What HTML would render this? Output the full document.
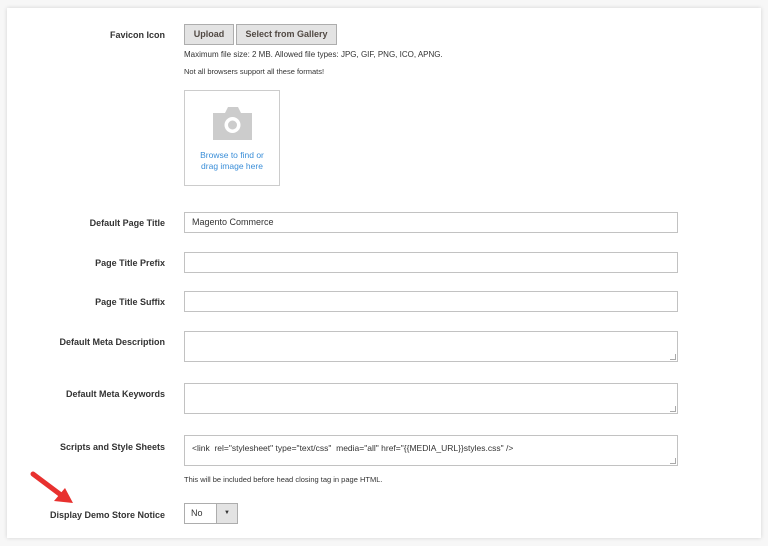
<!DOCTYPE html>
<html><head><style>
body{margin:0;width:768px;height:546px;background:#f7f7f7;font-family:"Liberation Sans",sans-serif;position:relative;overflow:hidden}
.card{position:absolute;left:7px;top:8px;width:754px;height:530px;background:#fff;box-shadow:0 0 4px rgba(0,0,0,.15)}
.a{position:absolute}
.lbl{position:absolute;right:603px;font-size:9px;font-weight:bold;color:#333;text-align:right;white-space:nowrap}
.inp{position:absolute;left:184px;width:494px;border:1px solid #c2c2c2;background:#fff;box-sizing:border-box;font-size:9px;color:#333;padding-left:7px}
.btn{position:absolute;top:24px;height:21px;background:#e3e3e3;border:1px solid #adadad;box-sizing:border-box;font-size:9px;font-weight:bold;color:#514943;text-align:center;line-height:19px}
.note{position:absolute;left:184px;font-size:7.5px;color:#333}
.rs{position:absolute;right:1px;bottom:1px;width:5px;height:5px;border-right:1px solid #aaa;border-bottom:1px solid #aaa}
</style></head><body>
<div class="card"></div>
<div class="lbl" style="top:30px">Favicon Icon</div>
<div class="btn" style="left:184px;width:50px">Upload</div>
<div class="btn" style="left:236px;width:101px">Select from Gallery</div>
<div class="note" style="top:50px;font-size:8px">Maximum file size: 2 MB. Allowed file types: JPG, GIF, PNG, ICO, APNG.</div>
<div class="note" style="top:67px">Not all browsers support all these formats!</div>
<div class="a" style="left:184px;top:90px;width:96px;height:96px;border:1px solid #ccc;box-sizing:border-box">
<svg class="a" style="left:28px;top:15px" width="39" height="35" viewBox="0 0 39 35"><path d="M0 7h12l3-6h10l3 6h11v27H0z" fill="#cccccc"/><circle cx="19.5" cy="19" r="8" fill="#fff"/><circle cx="19.5" cy="19" r="4.5" fill="#cccccc"/></svg>
<div class="a" style="left:0;top:59px;width:94px;text-align:center;font-size:8.5px;line-height:11px;color:#3a8ed8">Browse to find or<br>drag image here</div>
</div>
<div class="lbl" style="top:218px">Default Page Title</div>
<div class="inp" style="top:212px;height:21px;line-height:19px">Magento Commerce</div>
<div class="lbl" style="top:258px">Page Title Prefix</div>
<div class="inp" style="top:252px;height:21px"></div>
<div class="lbl" style="top:297px">Page Title Suffix</div>
<div class="inp" style="top:291px;height:21px"></div>
<div class="lbl" style="top:337px">Default Meta Description</div>
<div class="inp" style="top:331px;height:31px"><div class="rs"></div></div>
<div class="lbl" style="top:389px">Default Meta Keywords</div>
<div class="inp" style="top:383px;height:31px"><div class="rs"></div></div>
<div class="lbl" style="top:442px">Scripts and Style Sheets</div>
<div class="inp" style="top:435px;height:31px;padding-top:7px;font-size:8.5px">&lt;link&nbsp; rel="stylesheet" type="text/css"&nbsp; media="all" href="{{MEDIA_URL}}styles.css" /&gt;<div class="rs"></div></div>
<div class="note" style="top:475px">This will be included before head closing tag in page HTML.</div>
<div class="lbl" style="top:510px">Display Demo Store Notice</div>
<div class="a" style="left:184px;top:503px;width:54px;height:21px;border:1px solid #adadad;box-sizing:border-box;font-size:9px;color:#333;line-height:19px;padding-left:6px">No<div class="a" style="right:0;top:0;width:20px;height:19px;background:#e3e3e3;border-left:1px solid #adadad;text-align:center;font-size:6px;line-height:19px">▼</div></div>
<svg class="a" style="left:28px;top:470px" width="50" height="40" viewBox="0 0 50 40"><path d="M5 4L33 25" stroke="#e8312f" stroke-width="5" stroke-linecap="round"/><path d="M45 33L26 31L37 18z" fill="#e8312f"/></svg>
</body></html>
